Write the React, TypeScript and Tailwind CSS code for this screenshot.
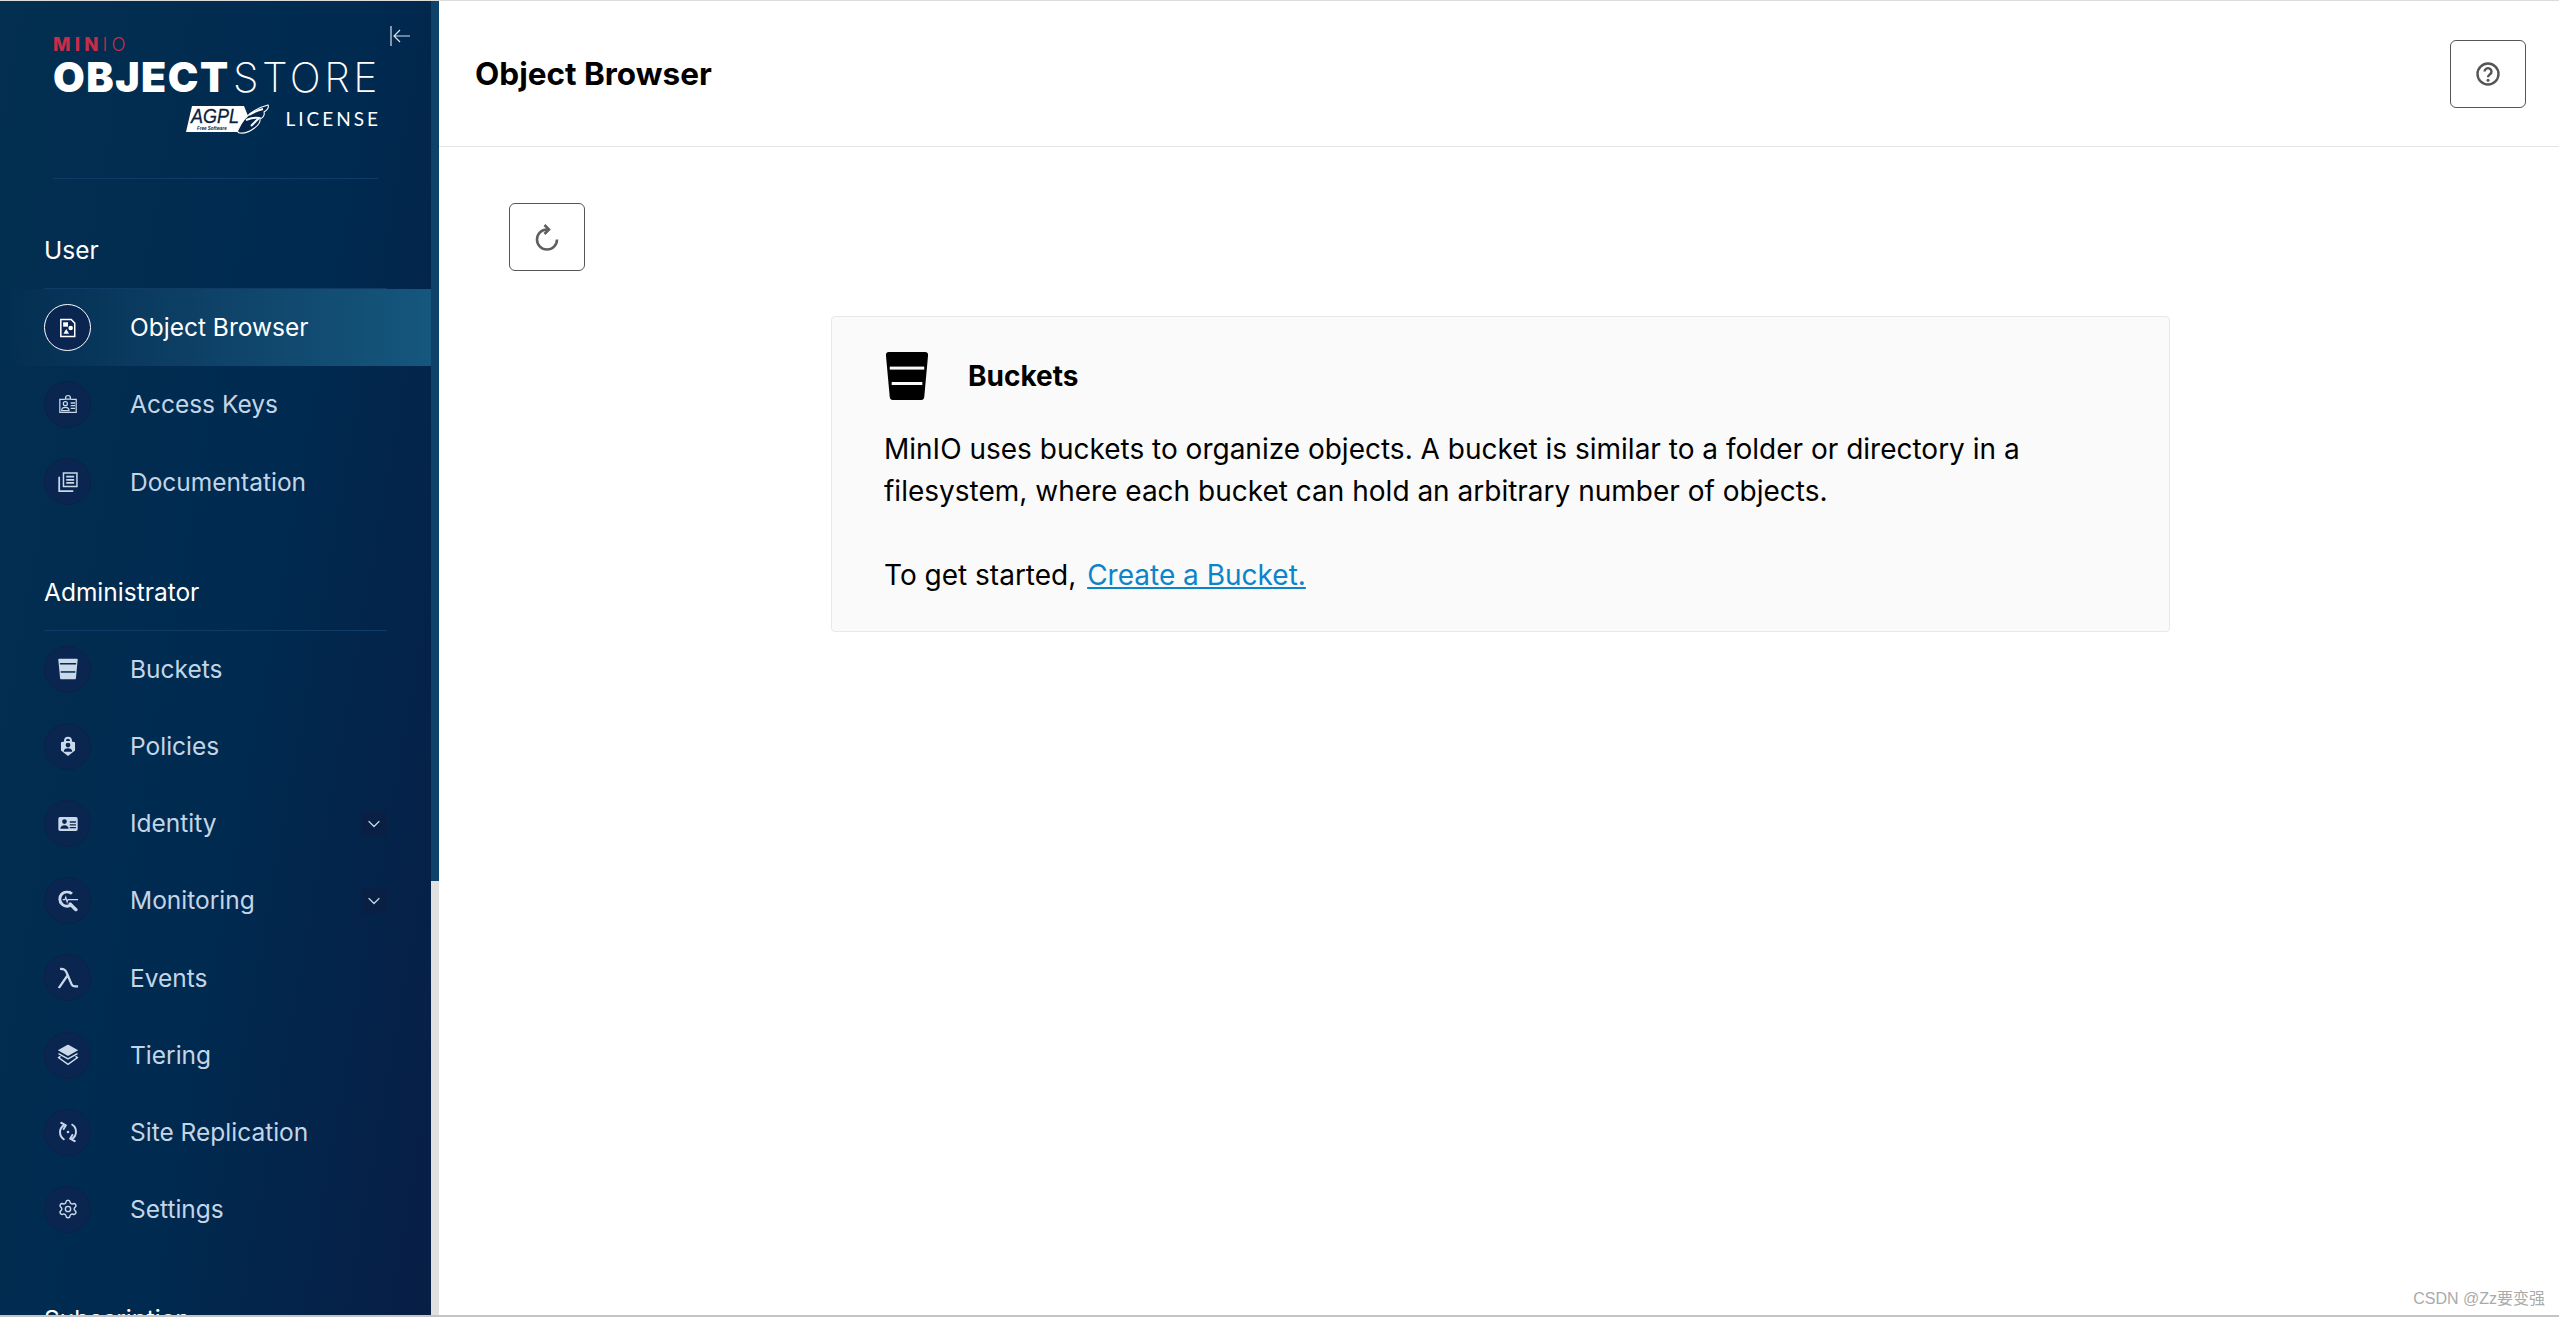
import React from "react";
import { ChevronDown, Settings } from "lucide-react";

const I = ({ children }: { children: React.ReactNode }) => (
  <svg width="24" height="24" viewBox="0 0 24 24" fill="currentColor">{children}</svg>
);

const ObjectIcon = () => (
  <I>
    <g transform="translate(-0.5 0)">
      <path fillRule="evenodd" d="M3.500 1.500h13L21 6V22.500H3.500V1.500Zm1.700 1.700v17.600h14.100V7l-3.500-3.800H5.200Z" />
      <rect x="7" y="5.500" width="5.500" height="5" />
      <circle cx="15.500" cy="12" r="2.600" />
      <path d="M10.500 13l3.200 5.500H7.300Z" />
    </g>
  </I>
);
const KeysIcon = () => (
  <I>
    <path fillRule="evenodd" d="M2 5h6.500v1.400H3.400v13.200h17.200V6.400h-5.100V5H22v16H2V5Z" />
    <path fillRule="evenodd" d="M8.500 3.800a3.500 3.300 0 0 1 7 0V6h-7V3.800Zm1.500 .9h4v-.9a2 1.900 0 0 0-4 0Z" />
    <circle cx="9" cy="10.500" r="2.300" fill="none" stroke="currentColor" strokeWidth="1.400" />
    <path d="M4.800 18.500c0-3 1.800-3.800 4.200-3.800s4.200.8 4.200 3.800Z" fill="none" stroke="currentColor" strokeWidth="1.400" />
    <path d="M15 9h5v1.500h-5ZM15 12h5v1.500h-5ZM15 15h5v1.500h-5Z" />
  </I>
);
const DocsIcon = () => (
  <I>
    <path fillRule="evenodd" d="M6 1h17v17H6V1Zm1.700 1.700v13.600h13.600V2.700H7.700Z" />
    <path d="M10 5h9v2h-9ZM10 8.500h9v2h-9ZM10 12h9v2h-9Z" />
    <path d="M1 6h2v15.500h15v2H1Z" />
  </I>
);
const BucketIcon = () => (
  <svg width="24" height="24" viewBox="0 0 24 24" fill="currentColor">
    <path d="M1 1.500C1 .6 1.600 0 2.500 0h19c.9 0 1.500.6 1.500 1.500L21 22.500c-.1.9-.7 1.500-1.500 1.500h-15c-.8 0-1.400-.6-1.500-1.500Z" />
    <rect x="2.800" y="5.200" width="18.400" height="1.700" fill="#0a2550" />
    <rect x="3.700" y="14.500" width="16.600" height="1.700" fill="#0a2550" />
  </svg>
);
const PolicyIcon = () => (
  <I>
    <path fillRule="evenodd" d="M7.500 6a4.500 4.500 0 0 1 9 0v.800l3.500 1V17l-8 6.500L4 17V7.800l3.500-1V6Zm2.200 0v.2h4.600V6a2.300 2.300 0 0 0-4.600 0ZM12 8.300a2.700 2.700 0 1 0 0 5.400 2.700 2.700 0 0 0 0-5.400ZM7.200 18.600h9.600c0-2.700-2-4-4.800-4s-4.800 1.300-4.800 4Z" />
  </I>
);
const IdentityIcon = () => (
  <I>
    <path fillRule="evenodd" d="M3 4h18a2 2 0 0 1 2 2v12a2 2 0 0 1-2 2H3a2 2 0 0 1-2-2V6a2 2 0 0 1 2-2Zm5 2.500a2.700 2.700 0 1 0 0 5.400 2.700 2.700 0 0 0 0-5.400ZM3.300 17.500h9.400c0-2.700-2-4.100-4.700-4.100s-4.700 1.400-4.700 4.100ZM14 9v1.500h7V9Zm0 3.200v1.500h7v-1.500Zm0 3.200v1.500h7v-1.500Z" />
  </I>
);
const MonitorIcon = () => (
  <svg width="24" height="24" viewBox="0 0 24 24" fill="none" stroke="currentColor">
    <path d="M16.500 3.800A8.200 8.200 0 1 0 16.800 15.500" strokeWidth="3.300" />
    <path d="M14.500 15.500l6.500 6.500" strokeWidth="3.800" strokeLinecap="round" />
    <path d="M6 10.500h2.500l1-2.800 1.500 5.600 1-2.800H23.500" strokeWidth="1.300" />
  </svg>
);
const LambdaIcon = () => (
  <svg width="24" height="24" viewBox="0 0 24 24" fill="none" stroke="currentColor" strokeWidth="2.600">
    <path d="M3 1.500c4 0 6 .5 7.500 4.500L16 19c.8 2 2 2.500 4.500 2.500H23.500M11.500 9L1.500 23.500" />
  </svg>
);
const TierIcon = () => (
  <svg width="24" height="24" viewBox="0 0 24 24" fill="none" stroke="currentColor">
    <path d="M12 0l11.500 6.500L12 13 .5 6.500Z" fill="currentColor" stroke="none" />
    <path d="M1.200 10.500L12 16.500l10.800-6" strokeWidth="1.700" />
    <path d="M3.500 13.500L1.200 15 12 22.700 22.800 15l-2.300-1.500" strokeWidth="1.700" />
  </svg>
);
const ReplIcon = () => (
  <svg width="24" height="24" viewBox="0 0 24 24" fill="none" stroke="currentColor" strokeWidth="2.200">
    <path d="M8 4A9.500 9.500 0 0 0 8 20.800" />
    <path d="M16 20a9.500 9.500 0 0 0 0-16.800" />
    <path d="M3.500 1L9.500 4.500 6.500 9.500" />
    <path d="M20.500 23L14.500 19.500l3-5" />
    <circle cx="12" cy="12" r="1.500" fill="currentColor" stroke="none" />
  </svg>
);
const HelpIcon = () => (
  <svg width="24" height="24" viewBox="0 0 24 24" fill="none" stroke="#555555" strokeWidth="2.400">
    <circle cx="12" cy="12" r="10.500" />
    <path d="M8.500 9.500a3.500 3.300 0 1 1 5.500 2.700c-1.400 1-2 1.600-2 3" />
    <circle cx="12" cy="18.200" r="1.500" fill="#555555" stroke="none" />
  </svg>
);
const RefreshIcon = () => (
  <svg width="24" height="27" viewBox="0 0 24 27" fill="none" stroke="#5f5f5f" strokeWidth="2.600">
    <path d="M22 15.500a10 10 0 1 1-10-10" />
    <path d="M9.500 1L14 5.500 9.500 10" />
  </svg>
);

type Item = { label: string; icon: React.ReactNode; active?: boolean; chevron?: boolean };

const userItems: Item[] = [
  { label: "Object Browser", icon: <ObjectIcon />, active: true },
  { label: "Access Keys", icon: <KeysIcon /> },
  { label: "Documentation", icon: <DocsIcon /> },
];
const adminItems: Item[] = [
  { label: "Buckets", icon: <BucketIcon /> },
  { label: "Policies", icon: <PolicyIcon /> },
  { label: "Identity", icon: <IdentityIcon />, chevron: true },
  { label: "Monitoring", icon: <MonitorIcon />, chevron: true },
  { label: "Events", icon: <LambdaIcon /> },
  { label: "Tiering", icon: <TierIcon /> },
  { label: "Site Replication", icon: <ReplIcon /> },
  { label: "Settings", icon: <Settings size={24} strokeWidth={1.600} /> },
];

const SectionLabel = ({ text }: { text: string }) => (
  <div className="h-[110px] shrink-0 flex items-end pb-[20px] mx-[44px] w-[343px] border-b border-[#0f3b66] text-[24.5px] leading-[36px] text-white">
    {text}
  </div>
);

const NavRow = ({ item }: { item: Item }) => (
  <div
    className={
      "h-[77.2px] shrink-0 flex items-center pl-[44px] pr-[44px] text-[24.5px] " +
      (item.active
        ? "bg-gradient-to-r from-[#0a3a5c00] via-[#0f4268] to-[#15577d] text-white"
        : "text-[#c4d5e6]")
    }
  >
    <span
      className={
        "w-[47px] h-[47px] shrink-0 rounded-full flex items-center justify-center bg-[#0a2550] " +
        (item.active ? "border-[1.5px] border-white text-white" : "border border-[#0b2249] text-[#c9d9e9]")
      }
    >
      <span className="scale-[0.88] flex">{item.icon}</span>
    </span>
    <span className="ml-[39px] flex-1">{item.label}</span>
    {item.chevron && (
      <span className="w-[26px] h-[26px] rounded-[3px] bg-[#0a1f44] flex items-center justify-center">
        <ChevronDown size={20} strokeWidth={1.500} className="text-[#c4d5e6]" />
      </span>
    )}
  </div>
);

const AgplLogo = () => (
  <svg width="84" height="30" viewBox="0 0 84 30" className="shrink-0">
    <path d="M6 2h52l4 10-8 16H0Z" fill="#fff" />
    <text x="5" y="19" fontFamily="'Liberation Sans', sans-serif" fontStyle="italic" fontSize="20" fill="#0a1f3f" stroke="#0a1f3f" strokeWidth="0.300" textLength="48" lengthAdjust="spacingAndGlyphs">AGPL</text>
    <text x="11" y="25.500" fontFamily="'Liberation Sans', sans-serif" fontStyle="italic" fontWeight="700" fontSize="4.500" fill="#0a1f3f">Free Software</text>
    <path d="M52 26C58 12 70 4 82 1c1 2-1 5-4 7 1 3-1 6-4 7 1 5-10 15-20 14-2 0-3-2-2-3Z" fill="#04244a" stroke="#fff" strokeWidth="1.100" />
    <path d="M60 16c5-2 9-3 13-2l-8 8M63 11c5-3 9-5 14-6" fill="none" stroke="#fff" strokeWidth="2" />
  </svg>
);

export default function App() {
  return (
    <div className="relative w-full h-screen overflow-hidden flex bg-white border-t border-t-[#dcdcdc] border-b-2 border-b-[#c4c4c4] font-['Inter',sans-serif]">
      <aside className="w-[431px] shrink-0 flex flex-col overflow-hidden bg-[linear-gradient(100deg,#032f50_0%,#002a50_55%,#081e45_100%)]">
        <div className="relative h-[177px] shrink-0 pl-[53px] pr-[53px] pt-[33px] text-white">
          <button className="absolute left-[389px] top-[24px] text-[#d8e2ec]" aria-label="Collapse">
            <svg width="22" height="22" viewBox="0 0 22 22" fill="none" stroke="currentColor" strokeWidth="1.200">
              <path d="M2 1v20M21 11H5M11 5l-6 6 6 6" />
            </svg>
          </button>
          <div className="text-[#c72c48] text-[18.5px] leading-[20px] tracking-[4.200px]">
            <span className="font-extrabold">MIN</span><span className="font-light">IO</span>
          </div>
          <div className="flex justify-between leading-[44px] mt-[1px] text-[41px] whitespace-nowrap">
            <span className="font-black tracking-[1.500px]">OBJECT</span>
            <span className="font-extralight tracking-[3.500px] mr-[-3px]">STORE</span>
          </div>
          <div className="flex items-center justify-end mt-[5px] h-[30px]">
            <AgplLogo />
            <span className="ml-[15px] mr-[-3px] text-[19px] tracking-[3px] font-['Lato',sans-serif]">LICENSE</span>
          </div>
        </div>
        <div className="h-px mx-[53px] shrink-0 bg-[#0f3b66]" />
        <div className="flex flex-col">
          <SectionLabel text="User" />
          {userItems.map((it) => <NavRow key={it.label} item={it} />)}
          <SectionLabel text="Administrator" />
          {adminItems.map((it) => <NavRow key={it.label} item={it} />)}
          <SectionLabel text="Subscription" />
        </div>
      </aside>
      <div className="w-[8px] shrink-0 flex flex-col">
        <div className="h-[880px] bg-[#0f4269]" />
        <div className="flex-1 bg-[#e0e0e0]" />
      </div>
      <main className="flex-1 min-w-0 flex flex-col">
        <header className="h-[146px] shrink-0 flex items-center justify-between pl-[36px] pr-[33px] border-b border-[#e4e4e4]">
          <h1 className="text-[31.5px] font-bold text-black">Object Browser</h1>
          <button className="w-[76px] h-[68px] rounded-[6px] border-[1.5px] border-[#555555] flex items-center justify-center" aria-label="Help">
            <HelpIcon />
          </button>
        </header>
        <div className="pt-[56px] pl-[70px]">
          <button className="w-[76px] h-[68px] rounded-[6px] border-[1.5px] border-[#555555] flex items-center justify-center" aria-label="Refresh">
            <RefreshIcon />
          </button>
        </div>
        <section className="mt-[45px] ml-[392px] w-[1339px] h-[316px] rounded-[4px] border border-[#e8e8e8] bg-[#fafafa] px-[52px] pt-[35px] text-black">
          <div className="flex items-center">
            <span className="w-[46px] flex justify-start">
              <svg width="46" height="48" viewBox="0 0 24 24" preserveAspectRatio="none">
                <path d="M1 1.500C1 .6 1.600 0 2.500 0h19c.9 0 1.500.6 1.500 1.500L21 22.500c-.1.9-.7 1.500-1.500 1.500h-15c-.8 0-1.400-.6-1.500-1.500Z" fill="#000" />
                <rect x="3" y="7.300" width="18" height="1.500" fill="#fafafa" />
                <rect x="4" y="15" width="16" height="1.500" fill="#fafafa" />
              </svg>
            </span>
            <h2 className="ml-[38px] text-[28px] font-bold">Buckets</h2>
          </div>
          <p className="mt-[28px] text-[28px] leading-[42px]">
            MinIO uses buckets to organize objects. A bucket is similar to a folder or directory in a filesystem, where each bucket can hold an arbitrary number of objects.
          </p>
          <p className="mt-[42px] text-[28px] leading-[42px]">
            To get started, <a href="#" className="ml-[3px] text-[#0b84c9] underline">Create a Bucket.</a>
          </p>
        </section>
      </main>
      <span className="absolute right-[14px] bottom-[6px] text-[16px] leading-[20px] text-[#aaaaaa] font-['Liberation_Sans','Noto_Sans_CJK_SC',sans-serif]">CSDN @Zz要变强</span>
    </div>
  );
}
